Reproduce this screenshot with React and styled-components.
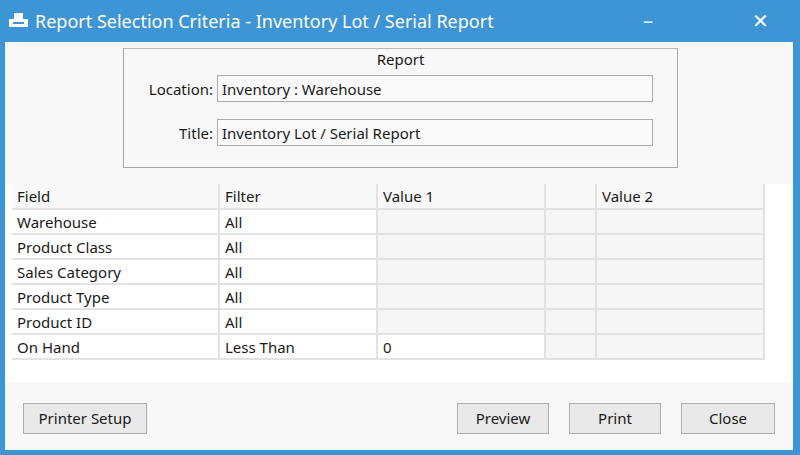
import React from "react";
import styled, { createGlobalStyle } from "styled-components";

const G = createGlobalStyle`
  html,body{margin:0;padding:0;}
  body{font-family:"Noto Sans","Open Sans",sans-serif;font-size:15px;color:#1a1a1a;}
`;
const Win = styled.div`
  width:800px;height:455px;box-sizing:border-box;background:#3d95d5;
  padding:0 7px 5px 5px;display:flex;flex-direction:column;
`;
const TitleBar = styled.div`
  height:42px;display:flex;align-items:center;color:#fff;font-size:18px;gap:6px;padding-left:4px;
`;
const TTitle = styled.div`flex:1;`;
const Ctl = styled.div`width:66px;text-align:center;font-size:20px;line-height:1;margin-right:${p=>p.$mr||0}px;`;
const Body = styled.div`
  flex:1;background:#f8f8f8;display:flex;flex-direction:column;padding-top:6px;
`;
const Group = styled.fieldset`
  margin:0 0 0 118px;width:555px;height:120px;box-sizing:border-box;border:1px solid #a8a8a8;
  border-top-color:#b8b8b8;padding:0 24px 0 0;display:flex;flex-direction:column;gap:17px;
`;
const Legend = styled.div`text-align:center;margin:0 0 -11px 24px;`;
const FRow = styled.div`display:flex;align-items:center;gap:4px;`;
const Lbl = styled.div`width:89px;text-align:right;`;
const Inp = styled.div`
  flex:1;height:27px;box-sizing:border-box;border:1px solid #adadad;background:#fafafa;
  padding:0 4px;display:flex;align-items:center;
`;
const GridWrap = styled.div`
  margin-top:16px;background:#fff;padding:0 23px 22px 7px;
`;
const Grid = styled.div`
  display:grid;grid-template-columns:208px 158px 168px 51px 168px;
`;
const Cell = styled.div`
  height:25px;box-sizing:border-box;padding:0 5px;display:flex;align-items:center;
  border-right:2px solid #e2e2e2;border-bottom:2px solid #e2e2e2;
  background:${p=>p.$h?"#f8f8f8":p.$g?"#f6f6f6":"#fff"};
  ${p=>p.$h?"height:26px;":""}
`;
const Bar = styled.div`flex:1;display:flex;align-items:center;padding:4px 18px 0 18px;gap:20px;`;
const Btn = styled.button`
  width:${p=>p.$w||92}px;height:31px;border:1px solid #adadad;background:#e9e9e9;
  font:inherit;font-size:15px;color:#1a1a1a;padding:0;
`;
const Sp = styled.div`flex:1;`;

const rows=[["Warehouse","All"],["Product Class","All"],["Sales Category","All"],["Product Type","All"],["Product ID","All"],["On Hand","Less Than","0"]];

export default function App(){
  return <Win><G/>
    <TitleBar>
      <svg width="20" height="16" viewBox="0 0 20 16" fill="#fff"><rect x="5" y="0" width="9" height="6"/><rect x="0" y="6" width="19" height="8" rx="1"/><rect x="4" y="9" width="11" height="2" fill="#3d95d5"/></svg>
      <TTitle>Report Selection Criteria - Inventory Lot / Serial Report</TTitle>
      <Ctl $mr={40}>–</Ctl><Ctl>✕</Ctl>
    </TitleBar>
    <Body>
      <Group>
        <Legend>Report</Legend>
        <FRow><Lbl>Location:</Lbl><Inp>Inventory : Warehouse</Inp></FRow>
        <FRow><Lbl>Title:</Lbl><Inp>Inventory Lot / Serial Report</Inp></FRow>
      </Group>
      <GridWrap>
        <Grid>
          {["Field","Filter","Value 1","","Value 2"].map((h,i)=><Cell key={i} $h>{h}</Cell>)}
          {rows.map((r,i)=><React.Fragment key={i}>
            <Cell>{r[0]}</Cell><Cell>{r[1]}</Cell><Cell $g={!r[2]}>{r[2]}</Cell><Cell $g/><Cell $g/>
          </React.Fragment>)}
        </Grid>
      </GridWrap>
      <Bar>
        <Btn $w={124}>Printer Setup</Btn><Sp/>
        <Btn>Preview</Btn><Btn>Print</Btn><Btn $w={94}>Close</Btn>
      </Bar>
    </Body>
  </Win>;
}
